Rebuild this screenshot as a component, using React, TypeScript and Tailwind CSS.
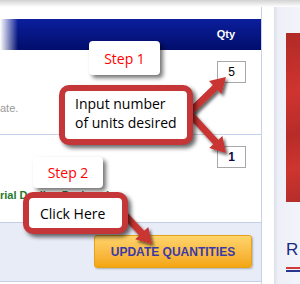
import React from "react";

type P = [number, number];

function arrowPoints(start: P, tip: P, shaftHalf: number, headLen: number, headHalf: number): string {
  const dx = tip[0] - start[0];
  const dy = tip[1] - start[1];
  const len = Math.hypot(dx, dy);
  const ux = dx / len;
  const uy = dy / len;
  const px = -uy;
  const py = ux;
  const bx = tip[0] - ux * headLen;
  const by = tip[1] - uy * headLen;
  const pts: P[] = [
    [start[0] + px * shaftHalf, start[1] + py * shaftHalf],
    [bx + px * shaftHalf, by + py * shaftHalf],
    [bx + px * headHalf, by + py * headHalf],
    [tip[0], tip[1]],
    [bx - px * headHalf, by - py * headHalf],
    [bx - px * shaftHalf, by - py * shaftHalf],
    [start[0] - px * shaftHalf, start[1] - py * shaftHalf],
  ];
  return pts.map((p) => `${p[0].toFixed(1)},${p[1].toFixed(1)}`).join(" ");
}

function Arrows() {
  const arrows: [P, P][] = [
    [[190, 112], [226, 77]],
    [[190, 114], [226, 153]],
    [[122, 212], [152, 244]],
  ];
  return (
    <svg className="absolute left-0 top-0" width="300" height="284" viewBox="0 0 300 284">
      <defs>
        <filter id="ash" x="-20%" y="-20%" width="140%" height="140%">
          <feDropShadow dx="2" dy="2.5" stdDeviation="1.5" floodColor="#000" floodOpacity="0.6" />
        </filter>
      </defs>
      {arrows.map(([s, t], i) => (
        <polygon key={i} points={arrowPoints(s, t, 3.4, 15, 9)} fill="#c83431" filter="url(#ash)" />
      ))}
    </svg>
  );
}

export default function App() {
  return (
    <div className="relative w-[300px] h-[284px] overflow-hidden bg-white font-['Liberation_Sans',Arial,sans-serif]">
      <div className="flex flex-col h-full">
        <div className="h-[7px] bg-gradient-to-b from-[#d2d2d2] to-white" />
        <div className="flex flex-1">
          {/* main panel */}
          <div className="w-[262px] border-r border-[#c9d1e6] flex flex-col pt-[12px]">
            <div className="h-[31px] flex items-center justify-end pr-[26px] bg-[linear-gradient(to_right,#ffffff_0px,rgba(255,255,255,0)_18px),linear-gradient(to_bottom,#0b1e9c,#020e6c)]">
              <span className="text-white font-bold text-[11px] leading-none">Qty</span>
            </div>
            <div className="h-[85px] border-b border-[#c5d2ea] flex">
              <div className="flex-1 pt-[45px]">
                <span className="text-[11px] text-[#9a9a9a]">ate.</span>
              </div>
              <div className="pt-[11px] pr-[15px]">
                <div className="w-[29px] h-[22px] border border-[#a8a8a8] flex items-center justify-center text-[12px] text-black">5</div>
              </div>
            </div>
            <div className="h-[87px] flex">
              <div className="flex-1 pt-[47px]">
                <span className="text-[11px] font-bold text-[#1f7a2c] whitespace-nowrap">rial Decline Package)</span>
              </div>
              <div className="pt-[11px] pr-[15px]">
                <div className="w-[29px] h-[22px] border border-[#a8a8a8] flex items-center justify-center text-[12px] font-bold text-[#0a0a40]">1</div>
              </div>
            </div>
            <div className="h-[60px] border-y border-[#c5cde2] bg-[#e8ecf7] flex justify-end pt-[12px] pr-[9px]">
              <div className="w-[158px] h-[33px] rounded-[3px] border border-[#e4a21a] bg-gradient-to-b from-[#ffd46a] to-[#f3a608] shadow-[1px_1px_2px_rgba(0,0,0,0.25)] flex items-center justify-center">
                <span className="text-[12px] font-bold text-[#3b3aa6]">UPDATE QUANTITIES</span>
              </div>
            </div>
          </div>
          <div className="w-[12px]" />
          {/* right column */}
          <div className="flex-1 flex flex-col pt-[26px] pl-[12px] bg-[linear-gradient(to_right,#dcdfe8,#edf0f7_4px,#f2f4fa)]">
            <div className="h-[169px] bg-[linear-gradient(165deg,#b02a26,#cf3430_35%,#b72c28_60%,#cd3530_80%,#b42d29)]" />
            <div className="pt-[39px] text-[17px] leading-none text-[#1b2a80]">R</div>
            <div className="mt-[9px] h-[2px] bg-[#d23a3a]" />
            <div className="mt-[1px] h-[2px] bg-[#2a3590]" />
          </div>
        </div>
      </div>

      {/* overlays */}
      <Arrows />

      <div className="absolute left-[89px] top-[41px] w-[71px] h-[34px] bg-white rounded-[4px] shadow-[3px_3px_4px_rgba(0,0,0,0.55)] flex items-center justify-center">
        <span className="text-[14px] text-[#ff0000] font-['Open_Sans',sans-serif]">Step 1</span>
      </div>

      <div className="absolute left-[59px] top-[85px] w-[134px] h-[60px] rounded-[10px] bg-[#c43638] p-[6px] shadow-[3px_3px_4px_rgba(0,0,0,0.6)]">
        <div className="w-full h-full bg-white rounded-[4px] pl-[10px] pt-[3px] font-['Open_Sans',sans-serif] text-[14px] leading-[19px] text-black">
          <div>Input number</div>
          <div>of units desired</div>
        </div>
      </div>

      <div className="absolute left-[33px] top-[157px] w-[70px] h-[31px] bg-white rounded-[4px] shadow-[3px_3px_4px_rgba(0,0,0,0.55)] flex items-center justify-center">
        <span className="text-[14px] text-[#ff0000] font-['Open_Sans',sans-serif]">Step 2</span>
      </div>

      <div className="absolute left-[23px] top-[192px] w-[105px] h-[42px] rounded-[10px] bg-[#c43638] p-[6px] shadow-[3px_3px_4px_rgba(0,0,0,0.6)]">
        <div className="w-full h-full bg-white rounded-[4px] flex items-center pl-[11px] font-['Open_Sans',sans-serif] text-[14px] text-black">
          Click Here
        </div>
      </div>
    </div>
  );
}
